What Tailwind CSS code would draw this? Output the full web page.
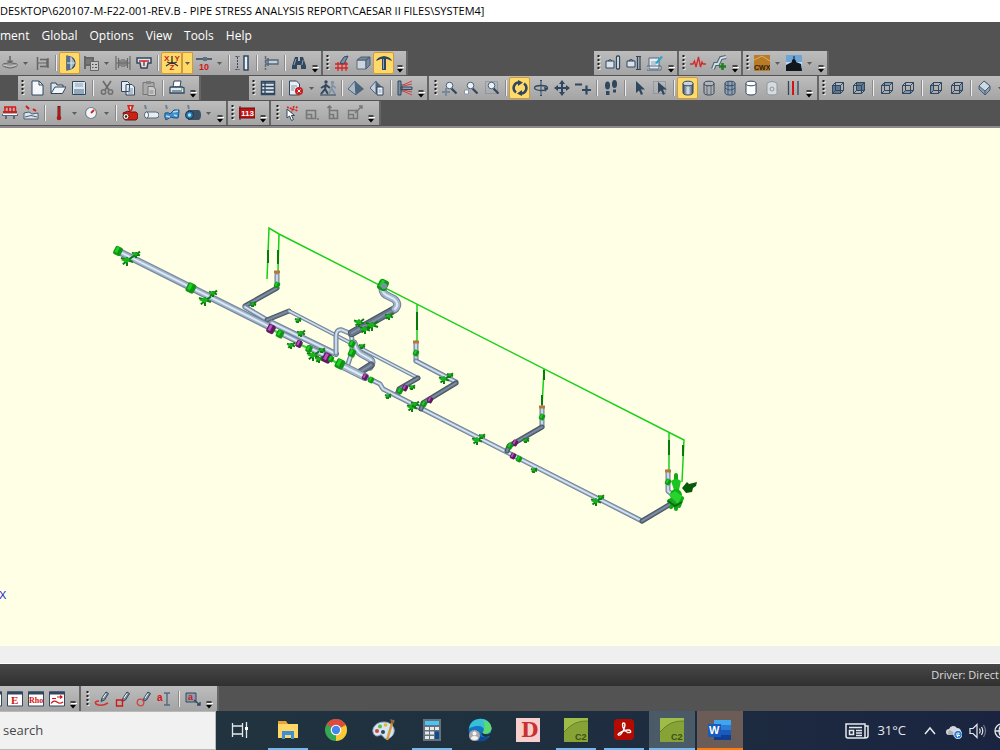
<!DOCTYPE html>
<html lang="en">
<head>
    <meta charset="UTF-8">
    <meta name="viewport" content="width=device-width, initial-scale=1.0">
    <title>CAESAR II</title>
    <script src="https://cdn.jsdelivr.net/npm/@tailwindcss/browser@4"></script>
</head>
<body class="min-h-screen flex flex-col overflow-x-hidden bg-[#535353] font-['Open_Sans','Noto_Sans',sans-serif]">

<header class="h-[22px] bg-white flex items-center overflow-hidden whitespace-nowrap">
    <h1 class="text-[11px] text-black">DESKTOP\620107-M-F22-001-REV.B - PIPE STRESS ANALYSIS REPORT\CAESAR II FILES\SYSTEM4]</h1>
</header>

<nav class="h-7 flex items-center gap-3 text-[12px] text-white">
    <button>ment</button>
    <button>Global</button>
    <button>Options</button>
    <button>View</button>
    <button>Tools</button>
    <button>Help</button>
</nav>

<!-- Toolbars, filled from the lists in the script -->
<div class="flex flex-col overflow-hidden pb-px border-b-2 border-[#8d898d]">
    <div class="flex h-[25px] pt-px">
        <div class="flex -ml-px" data-bar="load v flange | *elbow report v expand tee | *axes V nodes v | length | restraint | find over"></div>
        <div class="flex" data-bar="grip hatch box *hammer over"></div>
        <div class="flex ml-[186px]" data-bar="grip equip1 equip2 edit over"></div>
        <div class="flex" data-bar="grip wave pipeadd over"></div>
        <div class="flex" data-bar="grip cwx v ship v over"></div>
    </div>
    <div class="flex h-[25px] pt-px">
        <div class="flex ml-[18px]" data-bar="grip new open save | cut copy paste | print over"></div>
        <div class="flex ml-12" data-bar="grip list | error v people | pyramid pyrdoc | nozzle over"></div>
        <div class="flex px-0.5" data-bar="grip zoomall zoomsel zoomwin | *rotate orbit pan zoomio | walk | select selectbox | *shaded wire hidden outline trans bars over"></div>
        <div class="flex" data-bar="grip cube1 cube2 | cube3 cube4 | cube5 cube6 | iso v"></div>
    </div>
    <div class="flex h-[25px] pt-px">
        <div class="flex -ml-px" data-bar="loads disp | temp v gauge v | valve1 pipe1 pipe2 camera v over"></div>
        <div class="flex" data-bar="grip n113 over"></div>
        <div class="flex px-0.5" data-bar="grip pick scale1 scale2 scale3 over"></div>
    </div>
</div>

<main class="flex-1 bg-[#ffffe6]">
    <svg id="model" class="block w-full" viewBox="0 128 1000 518" role="img" aria-label="Piping model">
        <text x="-1" y="599" font-size="11" font-family="Liberation Sans, sans-serif" fill="#2222cc">X</text>
    </svg>
</main>

<div class="h-[18px] bg-[#efefef] border-b border-white"></div>
<div class="h-[22px] flex items-center justify-end overflow-hidden whitespace-nowrap bg-linear-to-b from-[#484848] to-[#303030] pr-px text-[11px] text-[#dcdcdc]">Driver: Direct</div>

<div class="flex h-[25px]">
    <div class="flex -ml-[17px]" data-bar="tblank tE tRho tdisp over"></div>
    <div class="flex px-0.5" data-bar="grip pen1 pen2 pen3 text | note over"></div>
</div>

<footer class="h-[39px] flex overflow-hidden bg-linear-to-r from-[#21363f] via-[#1f303f] to-[#1a2440]">
    <input type="text" aria-label="Search" value="search" class="w-[216px] shrink-0 bg-[#f1f1f1] border border-l-0 border-[#b9b9b9] pl-[3px] text-[13px] text-[#484848]">
    <div id="tasks" class="flex shrink-0"></div>
    <div class="ml-auto flex shrink-0 items-center text-[#e6e9ec]">
        <button class="flex items-center gap-2 mr-3 text-[13px]" aria-label="Weather">
            <svg class="w-6 h-5" viewBox="0 0 24 20" fill="none" stroke="#e6e9ec" stroke-width="1.5"><path d="M1 3h19v14H3q-2 0-2-2zM20 5h3v10q0 2-3 2M4 6.500h13M11 9.500h6M11 12h6M11 14.500h6"/><path d="M4.500 9.500h4v4h-4z"/></svg>
            31°C
        </button>
        <button class="w-6 h-6 flex items-center justify-center" aria-label="Show hidden icons"><svg class="w-3 h-3" viewBox="0 0 12 12" fill="none" stroke="#e6e9ec" stroke-width="1.500"><path d="M1 9l5-6 5 6"/></svg></button>
        <button class="w-6 h-6 flex items-center justify-center" aria-label="OneDrive"><svg class="w-4 h-4" viewBox="0 0 16 16"><path d="M3 12a3 3 0 0 1 0-6 4.500 4.500 0 0 1 8-1 4 4 0 0 1 4 4q0 3-3 3z" fill="#d4d7da"/><path d="M3 12a3 3 0 0 1 1-5l7 5z" fill="#aab0b5"/><circle cx="12" cy="11.500" r="4.200" fill="#2f80d3" stroke="#fff" stroke-width=".8"/><path d="M10 11h3M12 9.500l1.500 1.500M14 12.500h-3M12 14l-1.500-1.500" stroke="#fff" stroke-width="1" fill="none"/></svg></button>
        <button class="w-6 h-6 flex items-center justify-center" aria-label="Volume"><svg class="w-[18px] h-4" viewBox="0 0 18 16" fill="none" stroke="#e6e9ec" stroke-width="1.200"><path d="M1 5.500h3l4-4v13l-4-4H1z"/><path d="M10.500 5.500q1.500 2.500 0 5M12.500 4q2.500 4 0 8" /><path d="M14.500 2q4 6 0 12" stroke="#6f7a86"/></svg></button>
        <button class="w-2.5 h-6 flex items-center overflow-hidden" aria-label="Network"><svg class="w-4 h-4 shrink-0 ml-1" viewBox="0 0 16 16" fill="none" stroke="#e6e9ec" stroke-width="1.300"><circle cx="8" cy="8" r="7"/><path d="M1 8h14M8 1q-6 7 0 14q6-7 0-14"/></svg></button>
    </div>
</footer>

<script>
    const navy = "#30475f";

    const cylinder = (fill, extra = "") =>
        `<path d="M3 3.500v9q0 2.500 5 2.500t5-2.500v-9" fill="${fill}" stroke="${navy}"/><ellipse cx="8" cy="3.500" rx="5" ry="2.300" fill="${fill === "url(#steel)" ? "#c9d5e2" : fill}" stroke="${navy}"/>${extra}`;
    const cube = (face) =>
        `${face}<path d="M2.500 5.500h8v8h-8zM5.500 2.500h8v8h-8zM2.500 5.500l3-3M10.500 5.500l3-3M10.500 13.500l3-3M2.500 13.500l3-3" fill="none" stroke="${navy}"/>`;
    const magnifier = `<path d="M9.500 8.500l5 5" stroke="${navy}" stroke-width="2.200"/><circle cx="7.500" cy="5.500" r="3.300" fill="#e9f1f8" stroke="#4b6279"/>`;
    const pen = `<path d="M7 10.500l1-3.500 4-6 2.500 1.500-4 6.500z" fill="#7d8c9a" stroke="${navy}"/><path d="M9 7l3-4.500" stroke="#fff"/>`;
    const frame = (inner) => `<path d="M.5 1h15v14h-15z" fill="#fff" stroke="${navy}"/><path d="M0 .5h16v3H0z" fill="${navy}"/>${inner}`;
    const label = (x, y, size, fill, text, font = "Liberation Sans") =>
        `<text x="${x}" y="${y}" font-size="${size}" font-weight="bold" font-family="${font}" fill="${fill}" stroke="none">${text}</text>`;

    // 16x16 drawings, keyed by command: [tooltip, svg]
    const icons = {
        load: ["Forces", `<path d="M8 1v7M5.500 5.500L8 8l2.500-2.500" fill="none" stroke="#666" stroke-width="1.500"/><path d="M1 9q7-3 14 0v2q-7 4-14 0z" fill="#999" stroke="#666"/><path d="M1 10q7 3 14 0" stroke="#ccc" fill="none"/>`],
        flange: ["Flange", `<path d="M3.500 2v13M6 4.500h7v7H6M14 3v10" fill="none" stroke="#666" stroke-width="1.500"/><path d="M3.500 8h10" stroke="#666"/>`],
        elbow: ["Bend", `<path d="M5 1q8 1 8 7t-8 7z" fill="#9eb1c5" stroke="${navy}" stroke-width="1.200"/><path d="M4.500 1h4v14h-4z" fill="#56708b"/><path d="M5 8h8M9 1.500v13" stroke="#d9e3ed"/>`],
        report: ["Report", `<path d="M2 1v13M2 3h8v7H2" fill="#777" stroke="#666" stroke-width="2"/><path d="M7.500 6.500h8v9h-8z" fill="#c6c6c6" stroke="#666"/><path d="M9 9.500h1.500M12 9.500h2M9 12.500h1.500M12 12.500h2" stroke="#555"/>`],
        expand: ["Expansion joint", `<path d="M1 1v14M15 1v14M3.500 3v10M12.500 3v10M5 5v6M7 4v8M9 4v8M11 5v6M1 8h14" fill="none" stroke="#6a6a6a" stroke-width="1.200"/>`],
        tee: ["Tee", `<path d="M1 3h14v5h-3l-1 5H5L4 8H1z" fill="#dbe4ec" stroke="${navy}" stroke-width="1.500"/><path d="M3 6h10M8 6v5" stroke="#c22" stroke-width="1.500"/>`],
        axes: ["Axes", `<path d="M8 1v6L2 11M8 7l6 4M8 7v2M3 7l5 1.500 5-1.500" stroke="#333" stroke-width="1.300" fill="none"/>${label(0, 6, 8, "#c81e1e", "X")}${label(10.5, 6, 8, "#c81e1e", "Y")}${label(5.5, 15, 8, "#c81e1e", "Z")}`],
        nodes: ["Node numbers", `<path d="M0 4h16" stroke="${navy}" stroke-width="1.500"/><path d="M7 2h4v4H7z" fill="#5b7189"/>${label(3, 15, 9, "#d01818", "10")}`],
        length: ["Length", `<path d="M2.500 2v12M.5 1.500h4M.5 14.500h4" stroke="${navy}" stroke-dasharray="2 1" fill="none"/><path d="M9 1h4v14H9z" fill="#e8f0f8" stroke="${navy}" stroke-width="1.500"/>`],
        restraint: ["Restraint", `<path d="M2.500 1v14" stroke="#5c6c7b" stroke-width="1.500" stroke-dasharray="3 1"/><path d="M3 5h12v4H3z" fill="#c5d0da" stroke="#566779" stroke-width="1.300"/><path d="M5 3v8" stroke="#566779" stroke-width="1.500"/>`],
        find: ["Find", `<path d="M4 2h3v4h2V2h3l3 9v3h-5v-4H6v4H1v-3z" fill="${navy}"/><path d="M3 10l2-6M11 10l1-5" stroke="#8ea2b6"/>`],
        hatch: ["Insulation", `<path d="M1 9h13M1 13h13M4 7v9M8 7v9M12 7v9" stroke="#d22" stroke-width="1.300"/><path d="M6 8l4-6 4-1-4 8z" fill="#7f90a2" stroke="${navy}"/>`],
        box: ["Box", `<path d="M2 5h9v9H2z" fill="#ccd5dd" stroke="#5b6c7e"/><path d="M2 5l4-3h9l-4 3zM11 5l4-3v8l-4 4z" fill="#77899b" stroke="#4c5f73"/>`],
        hammer: ["Support", `<path d="M0 6q1-4 8-5 7 1 8 5l-5-2H5z" fill="${navy}"/><path d="M6 3h4v12H6z" fill="${navy}"/><path d="M7.500 4v10" stroke="#8fa5bb"/>`],
        equip1: ["Vessel", `<path d="M1 6h8v7H1z" fill="#d8e2ec" stroke="${navy}"/><path d="M3 6q2-3 4 0" fill="none" stroke="${navy}"/><rect x="11.500" y="1" width="3" height="13" rx="1" fill="#e7eef5" stroke="${navy}" stroke-width="1.300"/>`],
        equip2: ["Nozzle load", `<path d="M1 6h8v6H1z" fill="#d8e2ec" stroke="${navy}"/><path d="M3 6q2-3 4 0M10 1.500h5M10 14.500h5M11.500 2v12M14 2v12" fill="none" stroke="${navy}" stroke-width="1.200"/>`],
        edit: ["Edit", `<path d="M2 3h10v11H2zM0 11h14v4H0z" fill="#e8edf2" stroke="#50677e"/><path d="M4 7h5M4 9h5" stroke="#8fa2b5"/><path d="M8 8l6-7 2 1-6 7z" fill="#28a6c8"/>`],
        wave: ["Dynamic", `<path d="M0 9h3l1.500-3L6 12l2.500-10 2 10L12 7l1 2h3" fill="none" stroke="#d32828" stroke-width="1.300"/>`],
        pipeadd: ["Add pipe", `<path d="M2 14l2-5h3l3-6 5-1" fill="none" stroke="#4d6277" stroke-width="4"/><path d="M2 14l2-5h3l3-6 5-1" fill="none" stroke="#d5dfe8" stroke-width="1.800"/><path d="M11.500 8v7M8 11.500h7" stroke="#1f7d22" stroke-width="2.500"/>`],
        cwx: ["CADWorx", `<path d="M0 0h16v16H0z" fill="#b87b28"/><path d="M0 5l8-4 8 5" stroke="#e5af58" fill="none"/>${label(0, 15, 7, "#2b1c08", "CWX")}`],
        ship: ["Offshore", `<path d="M0 0h16v16H0z" fill="#6ea5d8"/><path d="M0 7h16v6H0z" fill="#bdd8ee"/><path d="M0 10l4-2 2-1V5l1.500-1V1h1v3L10 6v1l5 2 1 7H0z" fill="#10161c"/>`],
        new: ["New", `<path d="M3 1h7l4 4v10H3z" fill="#f4f8fb" stroke="${navy}"/><path d="M10 1v4h4" fill="none" stroke="${navy}"/>`],
        open: ["Open", `<path d="M1 13V3h5l1 2h6v2" fill="#dbe5ee" stroke="${navy}"/><path d="M1 13.500l4-6.500h11l-3.500 6.500z" fill="#f2f6fa" stroke="${navy}"/>`],
        save: ["Save", `<path d="M1.500 1.500h12l1 1v12h-13z" fill="#dfe8f0" stroke="${navy}"/><path d="M3 9h10v5H3z" fill="#93a8bc"/><path d="M4 4h8M4 6h8" stroke="#8ba0b5"/>`],
        cut: ["Cut", `<path d="M4 1l6 9M12 1L6 10" stroke="#6a6a6a" stroke-width="1.600"/><circle cx="4.500" cy="12" r="2.200" fill="none" stroke="#707070" stroke-width="1.500"/><circle cx="11.500" cy="12" r="2.200" fill="none" stroke="#707070" stroke-width="1.500"/>`],
        copy: ["Copy", `<path d="M1.500 1.500h6l2 2v8h-8zM6 4.500h6l2.500 2.500v8H6z" fill="#e5edf4" stroke="${navy}"/><path d="M8 9h5M8 11h5M8 13h5" stroke="#7c91a6"/>`],
        paste: ["Paste", `<path d="M2 2.500h11v12H2z" fill="#aaa" stroke="#767676"/><path d="M5 1h5v3H5z" fill="#888"/><path d="M7 6.500h5l2.500 2.500v6.500H7z" fill="#ccc" stroke="#767676"/><path d="M8.500 11h4M8.500 13h4" stroke="#888"/>`],
        print: ["Print", `<path d="M4 7l1-6h7l-1 6z" fill="#fff" stroke="${navy}"/><path d="M1 8q0-1 1-1h11l2 1v5H1z" fill="#e0e7ee" stroke="${navy}" stroke-width="1.300"/><path d="M3 11h10" stroke="${navy}"/><path d="M12 9h1.500" stroke="#2a2"/>`],
        list: ["List input", `<path d="M1.500 1.500h13v13h-13z" fill="#dbe4ec" stroke="${navy}" stroke-width="1.500"/><path d="M2 3h12M2 6.500h12M2 10h12M2 13.500h12M5 2v12" stroke="${navy}" stroke-width="1.300"/>`],
        error: ["Error check", `<path d="M1.500 1h7l3 3v11h-10z" fill="#e9eff5" stroke="${navy}"/><path d="M3 6h6M3 8h4M3 10h3" stroke="#8195a9"/><circle cx="11" cy="11" r="4" fill="#c81e1e"/><path d="M9.500 9.500l3 3M12.500 9.500l-3 3" stroke="#fff"/>`],
        people: ["Batch run", `<circle cx="6" cy="2" r="1.700" fill="${navy}"/><circle cx="12.500" cy="2.500" r="1.700" fill="#7f92a6"/><path d="M6 4l-1 5-4 5M5 9l3 5M6 5L1 8M6 5l4 3" stroke="${navy}" stroke-width="2" fill="none"/><path d="M12.500 4l-1 5-3 5M12 9l3 5M12 5l4 3" stroke="#7f92a6" stroke-width="1.800" fill="none"/><path d="M0 15h16" stroke="${navy}"/>`],
        pyramid: ["Static output", `<path d="M7 1L0 9l8 6z" fill="#a9bacb" stroke="#4d647b"/><path d="M7 1l9 8-8 6z" fill="#4d647b"/>`],
        pyrdoc: ["Static report", `<path d="M7 1L1 8l6 6z" fill="#c5d1dd" stroke="#4d647b"/><path d="M7 1l7 7-7 6z" fill="#4d647b"/><path d="M8 7h6v8H8z" fill="#eef3f8" stroke="${navy}"/><path d="M9.500 10h3M9.500 12h3" stroke="#8fa2b5"/>`],
        nozzle: ["Nozzle", `<path d="M1 1h3v14H1z" fill="#7e91a4" stroke="${navy}"/><path d="M4 7h11v2.500H4zM5 4v8" fill="#8da0b3" stroke="${navy}"/><path d="M6 5l9-4M6 6l9-2M6 11l9 4M6 10l9 2" stroke="#d43c3c"/>`],
        zoomall: ["Zoom extents", `<path d="M4 8v8M0 12h8" stroke="#74899e" stroke-width="1.800"/>${magnifier}`],
        zoomsel: ["Zoom selection", `${magnifier}<path d="M1.500 10h4v4h-4z" fill="#fff" stroke="#8799aa"/>`],
        zoomwin: ["Zoom window", `<path d="M1.500 1.500h12v12h-12z" fill="none" stroke="#6d8297" stroke-dasharray="1 1"/>${magnifier}`],
        rotate: ["Rotate", `<path d="M7 2.500A5.500 5.500 0 0 0 4 12.500M9 13.500A5.500 5.500 0 0 0 12 3.500" fill="none" stroke="${navy}" stroke-width="2.600"/><path d="M6 0l5 2.500L6 6zM10 10l-5 3.500 5 2.500z" fill="${navy}"/>`],
        orbit: ["Orbit", `<path d="M8 0v16" stroke="${navy}" stroke-width="2"/><path d="M8 1v14" stroke="#dce5ee" stroke-width=".7"/><ellipse cx="8" cy="8" rx="6.500" ry="2.500" fill="none" stroke="${navy}" stroke-width="1.300"/><path d="M11 7l4 1-3 4z" fill="${navy}"/>`],
        pan: ["Pan", `<path d="M8 2v12M2 8h12" stroke="${navy}" stroke-width="2"/><path d="M8 0l3 4H5zM8 16l3-4H5zM0 8l4-3v6zM16 8l-4-3v6z" fill="${navy}"/>`],
        zoomio: ["Zoom in or out", `<path d="M0 4.500h7M7 10h9M11.500 5.500v9" stroke="${navy}" stroke-width="2.200"/>`],
        walk: ["Walk through", `<ellipse cx="4.500" cy="5.500" rx="2.500" ry="4" fill="${navy}"/><ellipse cx="11.500" cy="4" rx="2.500" ry="4" fill="${navy}"/><path d="M3 11h3.500v4H3zM10 9.500h3v3h-3z" fill="${navy}"/>`],
        select: ["Select", `<path d="M5 1v12l3-2.500 2 4.500 2-1-2-4.500h4z" fill="${navy}"/>`],
        selectbox: ["Select by window", `<path d="M1.500 1.500h12v12h-12z" fill="none" stroke="#6d8297" stroke-dasharray="1 1"/><path d="M6 2v11l3-2.500 2 4.500 2-1-2-4.500h4z" fill="${navy}"/>`],
        shaded: ["Shaded", cylinder("url(#steel)")],
        wire: ["Wireframe", cylinder("none", `<path d="M6 6v8M10 6v8" stroke="${navy}" stroke-width=".7" fill="none"/>`)],
        hidden: ["Hidden line", cylinder("#8fa1b3", `<path d="M6 2v12M10 2v12M3 8q5 4 10 0" stroke="${navy}" stroke-width=".8" fill="none"/>`)],
        outline: ["Silhouette", cylinder("#ffffff")],
        trans: ["Translucent", `<path d="M3 3.500v9q0 2.500 5 2.500t5-2.500v-9q-5-4-10 0z" fill="#d6dbe0" stroke="#8d979f"/><circle cx="8" cy="9" r="2" fill="none" stroke="#8d979f"/>`],
        bars: ["Center line", `<path d="M3.500 1v14M13 1v14" stroke="${navy}" stroke-width="1.300"/><path d="M8 1v14" stroke="#d41414" stroke-width="2"/>`],
        cube1: ["Front", cube(`<path d="M2 5h9v9H2z" fill="#5f7892"/>`)],
        cube2: ["Back", cube(`<path d="M5 2h9v9H5z" fill="#5f7892"/>`)],
        cube3: ["Top", cube(`<path d="M2 5.500l3.500-3H14l-3.500 3z" fill="#8296aa"/>`)],
        cube4: ["Bottom", cube(`<path d="M2 13.500l3.500-3H14l-3.500 3z" fill="#8296aa"/>`)],
        cube5: ["Left", cube(`<path d="M2.500 5.500l3-3v8l-3 3z" fill="#8296aa"/>`)],
        cube6: ["Right", cube(`<path d="M10.500 5.500l3-3v8l-3 3z" fill="#8296aa"/>`)],
        iso: ["Isometric", `<path d="M7 1l6 5v4l-5 5-6-6V6z" fill="#8b9fb3" stroke="#465d75"/><path d="M7 1L2 6l6 5 5-5zM8 11v4" fill="#cfd9e2" stroke="#465d75"/>`],
        loads: ["Uniform loads", `<path d="M2 2h12M3 2v5M6.500 2v5M10 2v5M13.500 2v5" stroke="#d41c1c" stroke-width="1.500"/><path d="M1 7h14" stroke="#d41c1c" stroke-width="2"/><path d="M0 9h16v2H0zM3 11h2v3H3zM11 11h2v3h-2z" fill="#58697a"/><path d="M1 9.500h14" stroke="#fff"/>`],
        disp: ["Displacements", `<path d="M3 1l3 3M10 4l3 2" stroke="#d41c1c" stroke-width="2"/><path d="M1 8l5-1 3 2 6-1v6H1z" fill="#dde5ec" stroke="#4b6075"/><path d="M2 12q6-3 12 0" fill="none" stroke="#4b6075"/>`],
        temp: ["Temperature", `<path d="M8 1v11" stroke="#5e1a1a" stroke-width="3"/><path d="M8 2v10" stroke="#c01d1d" stroke-width="1.500"/><circle cx="8" cy="13" r="2.300" fill="#b01818"/>`],
        gauge: ["Pressure", `<circle cx="8" cy="8" r="5.500" fill="#f3f6f8" stroke="#75818d" stroke-width="1.200"/><path d="M8 8l3-3" stroke="#d41c1c" stroke-width="1.800"/>`],
        valve1: ["Valves", `<path d="M5 0h7l-2 6H7z" fill="#d8251b"/><path d="M7.500 1.500h2L8.500 5z" fill="#fff"/><path d="M1 8q5-3 8-1h5q2 1 2 4t-2 4H3z" fill="#c92318" stroke="#731008"/><circle cx="4" cy="11.500" r="3" fill="#fff" stroke="#731008"/><circle cx="4" cy="11.500" r="1.200" fill="#222"/>`],
        pipe1: ["Pipe size", `<path d="M2 0l1 4" stroke="#6f8295" stroke-width="2"/><path d="M3 7h10q3 0 3 3t-3 3H3z" fill="#e8edf1" stroke="#56697c"/><ellipse cx="3.500" cy="10" rx="2" ry="3" fill="#fff" stroke="#56697c"/>`],
        pipe2: ["Material", `<path d="M2 0l1 4" stroke="#6f8295" stroke-width="2"/><path d="M1 8q4-1 5 1l4-4h5q0 5-1 8h-4l-3-1-5 3q-2-3-1-7z" fill="#3e8fd0" stroke="#20517e"/><path d="M2 11l4 1M9 7l5-1M10 10l3 1" stroke="#b5dcf7" stroke-width="1.500"/>`],
        camera: ["Insulation thickness", `<path d="M3 0l1 4" stroke="#6f8295" stroke-width="2"/><path d="M3 5h10q3 0 3 5t-3 5H3z" fill="#3c5064"/><circle cx="4.500" cy="10" r="4" fill="#2278ad" stroke="#234"/><circle cx="4.500" cy="10" r="1.700" fill="#a8e0ff"/>`],
        n113: ["Node labels", `<path d="M0 3h16v10H0z" fill="#c11515" stroke="#641010"/><path d="M1 1v14" stroke="#801010"/>${label(2, 11, 8, "#fff", "113")}`],
        pick: ["Pick", `<path d="M3 2l11 4M10 1L7 8M12 3l2-2" stroke="#d22" stroke-width="1.600" stroke-dasharray="2 1"/><path d="M3 4v9l2.500-2 2 4.500 2-1-2-4h3z" fill="#fff" stroke="${navy}"/>`],
        scale1: ["Scale", `<path d="M1.500 5.500h9v8h-9zM1.500 9.500h5v4M12 14h2" fill="none" stroke="#777" stroke-width="1.600"/>`],
        scale2: ["Scale up", `<path d="M3.500 5.500h8v8h-8zM3.500 9.500h4v4M3.500 1v5M1.500 3l2-2 2 2" fill="none" stroke="#777" stroke-width="1.600"/>`],
        scale3: ["Scale diagonal", `<path d="M1.500 5.500h9v8h-9zM1.500 9.500h5v4M8 8l7-7M12 1h3v3" fill="none" stroke="#777" stroke-width="1.400"/>`],
        tblank: ["Table", frame("")],
        tE: ["Elastic modulus", frame(label(4, 13, 11, "#d41414", "E", "Liberation Serif"))],
        tRho: ["Density", frame(label(1, 12, 8, "#d41414", "Rho", "Liberation Serif"))],
        tdisp: ["Displacements", frame(`<path d="M3 7.500h4M8 6h5M11 4.500L13 6l-2 1.500M2 12.500q3-4 6-1.500t6 0" fill="none" stroke="#d41414" stroke-width="1.200"/>`)],
        pen1: ["Freehand", `${pen}<path d="M5 10Q0 10 2 13q5 3 12-1" fill="none" stroke="#d43030" stroke-width="1.500"/>`],
        pen2: ["Rectangle", `${pen}<path d="M1.500 9h6v6h-6z" fill="none" stroke="#d41414" stroke-width="1.300"/>`],
        pen3: ["Circle", `${pen}<circle cx="4.500" cy="11.500" r="3.300" fill="none" stroke="#d44040" stroke-width="1.300"/>`],
        text: ["Text", `${label(0, 10, 10, "#d41414", "a")}<path d="M7 2h2q1 0 1 1 0-1 1-1h2M10 2v12M7 14h6" fill="none" stroke="#54697e" stroke-width="1.400"/>`],
        note: ["Note", `<path d="M1 2h10v9H1z" fill="#8d9baa" stroke="${navy}"/>${label(3, 9, 9, "#d41414", "a")}<path d="M9 9l6 5M12 14h3v-3" fill="none" stroke="${navy}" stroke-width="1.300"/>`],
    };

    const svg = (body) => `<svg class="w-4 h-4 shrink-0" viewBox="0 0 16 16" aria-hidden="true">${body}</svg>`;
    const caret = `<svg class="w-[5px] h-[3px]" viewBox="0 0 5 3"><path d="M0 0h5L2.500 3z" fill="#5c5c5c"/></svg>`;

    function toolbarItem(token) {
        if (token === "|") return `<span class="w-[7px] shrink-0 flex justify-center items-center"><i class="w-0.5 h-4 border-l border-[#8a8a8a] bg-[#eeeeee]"></i></span>`;
        if (token === "v") return `<button class="w-[11px] shrink-0 flex justify-center items-center" aria-label="More">${caret}</button>`;
        if (token === "V") return `<button class="w-[11px] h-[22px] shrink-0 flex justify-center items-center bg-[#ffd968] border border-[#cf9a37]" aria-label="More">${caret}</button>`;
        if (token === "grip") return `<svg class="w-2 h-4 shrink-0" viewBox="0 0 8 16"><path d="M5.500 1v14" stroke="#eee" stroke-width="2" stroke-dasharray="2 2"/><path d="M4.500 0v16" stroke="#222" stroke-width="2" stroke-dasharray="2 2"/></svg>`;
        if (token === "over") return `<button class="w-3 shrink-0 flex justify-center self-end pb-0.5" aria-label="Toolbar options"><svg class="w-2 h-2" viewBox="0 0 8 8"><path d="M1.500 1h5" stroke="#000" stroke-width="1.200"/><path d="M2 2.500h6" stroke="#fff"/><path d="M1 4h6L4 7.500z" fill="#000"/></svg></button>`;
        const active = token.startsWith("*");
        const [title, body] = icons[token.replace("*", "")];
        return `<button title="${title}" class="w-[21px] h-[22px] shrink-0 flex justify-center items-center ${active ? "bg-[#ffda6b] border border-[#cf9a37] rounded-[2px]" : ""}">${svg(body)}</button>`;
    }

    document.querySelectorAll("[data-bar]").forEach(bar => {
        bar.classList.add("shrink-0", "items-center", "border-r-2", "border-[#666666]", "bg-linear-to-b", "from-[#bdbdbd]", "to-[#a4a4a4]");
        bar.innerHTML = bar.dataset.bar.split(" ").map(toolbarItem).join("");
    });

    // Taskbar: [name, state, 24x24 drawing]
    const c2 = `<path d="M0 0h24v24H0z" fill="#86a335"/><path d="M0 14Q10 2 24 3V0H0z" fill="#9fbb48"/><path d="M0 14Q10 2 24 3" fill="none" stroke="#66812a"/>${label(11, 22, 9, "#3c4c17", "C2")}`;
    const tasks = [
        ["Task view", "", `<path d="M4.500 5v3h10V5M4.500 19v-3h10v3M4.500 8v8M14.500 8v8M18.500 4v16" fill="none" stroke="#e4e8eb" stroke-width="1.300"/><path d="M17 9h3v3h-3z" fill="#fff"/>`],
        ["File Explorer", "open", `<path d="M2 3h8l2 3h10v14H2z" fill="#e8a33a"/><path d="M2 6h20v14H2z" fill="#ffd766"/><path d="M6 13h12v8h-3v-4H9v4H6z" fill="#3c8fd8"/>`],
        ["Chrome", "", `<circle cx="12" cy="12" r="11" fill="#36a852"/><path d="M12 12L2.500 6.500A11 11 0 0 1 21.500 6.500z" fill="#dd4b3d"/><path d="M12 12l9.500-5.500A11 11 0 0 1 12 23z" fill="#fbc934"/><path d="M12 12V7h9.800" fill="#dd4b3d"/><circle cx="12" cy="12" r="5.300" fill="#fff"/><circle cx="12" cy="12" r="4.200" fill="#4587ee"/>`],
        ["Paint", "", `<path d="M12 4C4 4 0 10 1 14s4 5 7 3c3-1 3 4 7 4 5-1 8-6 7-10s-5-7-10-7z" fill="#d4e5f4" stroke="#8da9c2"/><circle cx="5" cy="13" r="2" fill="#d8402f"/><circle cx="8" cy="8.500" r="2" fill="#6bb541"/><circle cx="13.500" cy="7" r="1.800" fill="#eeb32c"/><circle cx="11" cy="14" r="2" fill="#2c4658"/><path d="M21 2l-6 20" stroke="#d99b3b" stroke-width="2.500"/><path d="M18 1l5 2-3 4z" fill="#8c683c"/>`],
        ["Calculator", "open", `<path d="M3 1h18v22H3z" fill="#66717c"/><path d="M5 3h14v4H5z" fill="#48c5f2"/><path d="M5 9h4v3H5zM10 9h4v3h-4zM15 9h4v3h-4zM5 13.500h4v3H5zM10 13.500h4v3h-4zM5 18h4v3H5zM10 18h4v3h-4z" fill="#e7eaed"/><path d="M15 13.500h4V21h-4z" fill="#0c4c94"/>`],
        ["Edge", "", `<circle cx="12" cy="12" r="11.300" fill="#1674c5"/><path d="M1 11C2-2 22-3 23.500 10c0 5-6 7-9 5 3-3 1-7-4-7S1 10 1 11z" fill="#38bfd8"/><path d="M15 2q8 2 8.500 8c0 5-6 7-9 5q4-7 0.500-13z" fill="#5bdb6b"/><path d="M10 12q0 9 11 7-4 5-10 4-6-5-1-11z" fill="#0b4a92"/><path d="M14 13q-1 4 7 3l3-2v3l-6 2q-6-1-4-6z" fill="#1f303f"/><circle cx="6.500" cy="17.500" r="5.500" fill="#aaa"/><circle cx="6.500" cy="15.500" r="2" fill="#f4f4f4"/><path d="M3 21q0-3 3.500-3t3.500 3q-3.500 2-7 0z" fill="#f4f4f4"/>`],
        ["Dictionary", "", `<path d="M0 0h24v24H0z" fill="#f8cfcf"/>${label(5, 19, 20, "#c9302f", "D", "DejaVu Serif")}`],
        ["CAESAR II", "open", c2],
        ["Acrobat", "open", `<rect x="2" y="1" width="20" height="21" rx="4" fill="#b30b00"/><path d="M11.500 5q3 0 0 7-3 6-5 5t5-4q6-2 7 0t-3 1.500q-5-3-5-8 0-1.500 1-1.500z" fill="none" stroke="#fff" stroke-width="1.400"/>`],
        ["CAESAR II report", "active", c2],
        ["Word", "alert", `<path d="M6 2h17v5H6z" fill="#41a5ee"/><path d="M6 7h17v5H6z" fill="#2b7cd3"/><path d="M6 12h17v5H6z" fill="#185abd"/><path d="M6 17h17v5H6z" fill="#103f91"/><path d="M0 6h13v13H0z" fill="#185abd"/>${label(1, 16, 11, "#fff", "W")}`],
    ];
    const taskStyle = {
        "": ["", ""],
        open: ["", "bg-[#76b9ed] w-10"],
        active: ["bg-[#4a5a66]", "bg-[#76b9ed] w-full"],
        alert: ["bg-[#6b5c57]", "bg-[#ff7b0a] w-full"],
    };
    document.querySelector("#tasks").innerHTML = tasks.map(([name, state, body]) => `
        <button title="${name}" class="w-12 h-full px-px flex flex-col">
            <span class="w-full flex-1 flex items-center justify-center ${taskStyle[state][0]}"><svg class="w-6 h-6" viewBox="0 0 24 24">${body}</svg></span>
            <i class="h-0.5 mx-auto ${taskStyle[state][1]}"></i>
        </button>`).join("");

    // Pipe runs: [path, diameter, shade]
    const pipes = [
        ["M277 275V285", 5, "light"],
        ["M277 288L245 306", 5, "dark"],
        ["M245 307L267 320", 5, "light"],
        ["M267 320L289 311", 5, "dark"],
        ["M289 311L418 378", 4, "light"],
        ["M418 378L399 389L397 395", 5, "dark"],
        ["M118 251L272 328", 7, "light"],
        ["M272 323L336 354", 6, "light"],
        ["M283 334L299 342", 6, "light"],
        ["M310 348L328 357", 6, "light"],
        ["M336 353V336Q336 329 342 330L349 333Q352 335 352 341V352L348 364", 5, "light"],
        ["M352 333L395 309", 8, "dark"],
        ["M395 309Q400 304 394 299L386 295Q381 292 383 284", 8, "light"],
        ["M354 343Q356 351 361 354L370 359Q374 362 370 367", 7, "light"],
        ["M371 365L360 372", 7, "dark"],
        ["M341 365L365 377", 8, "light"],
        ["M372 380L380 384L383 389L642 521", 5, "light"],
        ["M642 521L674 502", 5, "dark"],
        ["M416 343V360", 5, "light"],
        ["M416 361L456 382", 5, "light"],
        ["M456 383L423 403L421 409", 5, "dark"],
        ["M542 408V426", 5, "light"],
        ["M542 427L509 446L507 451", 5, "dark"],
        ["M668 472V491L673 495", 5, "light"],
    ];
    const shades = {
        light: ["#6f8196", "#a3b6cd", "#dfebf7"],
        dark: ["#4a5563", "#66758a", "#8292a8"],
    };

    const steelLines = "M267 279L269 228L279 234L684 440L682 482M279 234L278 272M417 304V342M544 369L542 407M669 433V471";
    const darkSteel = "M268 250V263M278 250V264M417 312V330M544 370V380M542 395V405M669 440V455M683 445V456";

    // Green restraints: [x, y, size]
    const supports = [[127, 260, 6], [136, 254, 4], [205, 300, 6], [213, 293, 4], [253, 304, 3], [298, 320, 3], [301, 333, 4], [291, 345, 4], [313, 355, 6], [319, 359, 4], [322, 350, 3],
        [359, 322, 5], [365, 329, 5], [372, 325, 6], [389, 316, 4], [362, 346, 3], [388, 396, 3], [412, 387, 3], [444, 379, 5], [450, 375, 3], [412, 407, 5], [415, 404, 4], [477, 440, 5],
        [482, 436, 3], [526, 440, 3], [534, 470, 3], [596, 501, 5], [601, 497, 3]];
    // Flanges and valves: [x, y, radius, colour]
    const flanges = [[118, 251, 4.5, "g"], [191, 288, 5, "g"], [277, 285, 3, "g"], [271, 329, 4.5, "p"], [280, 334, 4, "g"], [299, 344, 3.5, "p"], [309, 349, 3.5, "g"], [327, 358, 5, "p"], [331, 359, 3, "g"],
        [340, 364, 5, "g"], [352, 344, 3.5, "g"], [352, 353, 4, "g"], [383, 285, 5.5, "g"], [365, 377, 3, "p"], [371, 380, 3, "g"], [405, 388, 3, "p"], [400, 391, 3, "g"], [416, 353, 3, "g"],
        [430, 400, 3, "p"], [424, 404, 3, "g"], [542, 417, 3, "g"], [515, 443, 3, "p"], [510, 446, 3, "g"], [513, 456, 3, "p"], [519, 459, 3, "g"], [668, 482, 3, "g"]];
    const caps = [[277, 273], [416, 343], [542, 408], [668, 472]];

    let drawing = `<defs><linearGradient id="steel"><stop stop-color="#344b63"/><stop offset=".5" stop-color="#dce6ef"/><stop offset="1" stop-color="#344b63"/></linearGradient></defs>`;
    drawing += `<path d="${steelLines}" fill="none" stroke="#19d019" stroke-width="1.500"/><path d="${darkSteel}" fill="none" stroke="#087a0c" stroke-width="2"/>`;
    drawing += `<path d="M271 329L283 335M299 344L310 349M328 358L341 365M365 377L373 381" stroke="#2fdc2f" stroke-width="2"/>`;
    pipes.forEach(([d, width, shade]) => {
        const [edge, body, shine] = shades[shade];
        drawing += `<g fill="none" stroke-linejoin="round" stroke-linecap="round"><path d="${d}" stroke="${edge}" stroke-width="${width}"/><path d="${d}" stroke="${body}" stroke-width="${width - 2}"/><path d="${d}" stroke="${shine}" stroke-width="${width / 4}"/></g>`;
    });
    supports.forEach(([x, y, s]) => {
        drawing += `<g transform="translate(${x} ${y})"><path d="M${-s} ${-s / 3}L${s} ${s / 3}M${-s * 0.7} ${s * 0.7}L${s} ${-s * 0.6}M0 ${-s * 0.5}V${s}" stroke="#0b7d10" stroke-width="2"/><path d="M${-s} 0L0 ${-s / 2}L${s / 2} 0L0 ${s / 2}z" fill="#16b51b"/></g>`;
    });
    flanges.forEach(([x, y, r, c]) => {
        const [dark, bright] = c === "g" ? ["#0f9614", "#1fd024"] : ["#5c1c60", "#c24fc0"];
        drawing += `<g transform="translate(${x} ${y}) rotate(27)"><rect x="${-r * 0.9}" y="${-r}" width="${r * 1.8}" height="${r * 2}" rx="${r / 2}" fill="${dark}"/><path d="M${-r * 0.3} ${-r * 0.8}V${r * 0.5}" stroke="${bright}" stroke-width="${r * 0.6}"/></g>`;
    });
    caps.forEach(([x, y]) => {
        drawing += `<path d="M${x - 3} ${y - 1}h6" stroke="#b8763a" stroke-width="3"/>`;
    });
    drawing += `<circle cx="384" cy="286" r="3" fill="#7d8fa5"/>`;
    // End anchor
    drawing += `<path d="M682 488l5-6 2 2 8-2-1 4-3 2-1 4-6 1z" fill="#075c0a"/><path d="M676 475v8M676 498v11M669 501l6-3M671 507l4-4M682 498l-3 8" stroke="#12a817" stroke-width="4" stroke-linecap="round"/><path d="M671 481q5-4 10 0l-2 9h-5z" fill="#1bc421"/><circle cx="676" cy="495" r="6" fill="#12b018"/><path d="M669 495l6-4 7 5-4 8z" fill="#27d42d"/><path d="M668 501l7 5 7-4" stroke="#076b0b" stroke-width="2" fill="none"/>`;
    document.querySelector("#model").insertAdjacentHTML("afterbegin", drawing);
</script>

</body>
</html>
